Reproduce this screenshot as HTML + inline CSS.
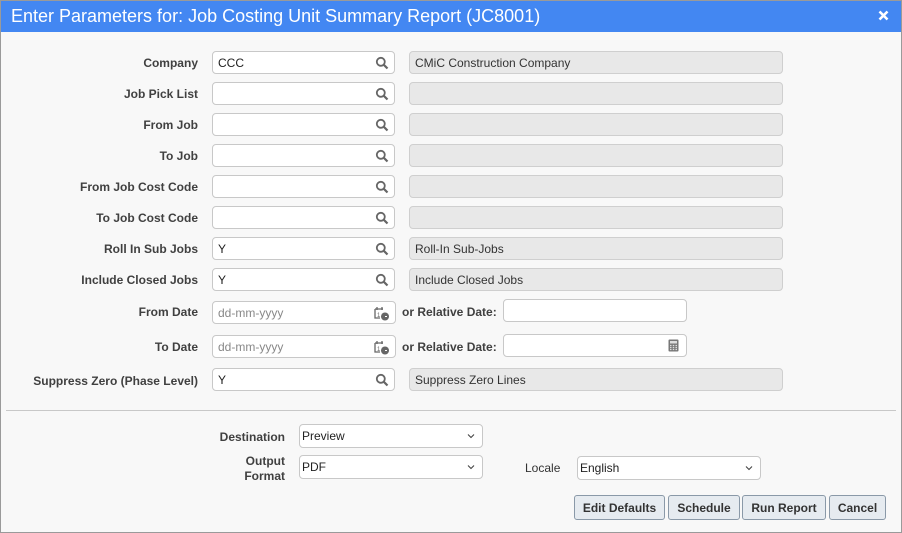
<!DOCTYPE html>
<html><head><meta charset="utf-8"><style>
*{box-sizing:border-box;margin:0;padding:0}
body{width:902px;height:533px;background:#fff;font-family:"Liberation Sans",Arial,sans-serif;overflow:hidden;position:relative}
#win{position:absolute;left:0;top:0;width:902px;height:533px;border:1px solid #9a9a9a;background:#f8f8f8}
#title{position:absolute;left:0;top:0;width:900px;height:31px;background:#4387f2;color:#fff;font-size:18px;line-height:31px;padding-left:10px}
#x{position:absolute;right:12px;top:9px}
.l{position:absolute;font-size:12px;font-weight:bold;color:#404040;text-align:right}
.in{position:absolute;height:23px;background:#fff;border:1px solid #c8c8c8;border-radius:4px;font-size:12px;color:#222;line-height:22px;padding-left:5px}
.ro{position:absolute;height:23px;background:#e8e8e8;border:1px solid #cfcfcf;border-radius:4px;font-size:12px;color:#333;line-height:22px;padding-left:5px}
.ph{color:#888}
.ic{position:absolute;right:5px;top:4px}
.sel{position:absolute;height:24px;background:#fff;border:1px solid #c8c8c8;border-radius:4px;font-size:12px;color:#222;line-height:22px;padding-left:2px}
.sel .ch{position:absolute;right:7px;top:8px}
.btn{position:absolute;top:495px;height:25px;background:#e6ebf0;border:1px solid #8a99a8;border-radius:3px;font-size:12px;font-weight:bold;color:#333;line-height:24px;text-align:center}
.n{font-weight:normal}
</style></head><body>
<div id="win">
<div id="title">Enter Parameters for: Job Costing Unit Summary Report (JC8001)
<svg id="x" width="11" height="11" viewBox="0 0 11 11"><path d="M1.5 1.5L9.5 9.5M9.5 1.5L1.5 9.5" stroke="#fff" stroke-width="2.6"/></svg></div>
</div>

<div class="l" style="left:0;width:198px;top:56px">Company</div>
<div class="in" style="left:212px;top:51px;width:183px">CCC<svg class="ic" width="14" height="14" viewBox="0 0 14 14"><circle cx="5.8" cy="5.8" r="4" fill="none" stroke="#666" stroke-width="1.8"/><path d="M8.8 8.8L12.5 12.5" stroke="#666" stroke-width="2.2"/></svg></div>
<div class="ro" style="left:409px;top:51px;width:374px">CMiC Construction Company</div>

<div class="l" style="left:0;width:198px;top:87px">Job Pick List</div>
<div class="in" style="left:212px;top:82px;width:183px"><svg class="ic" width="14" height="14" viewBox="0 0 14 14"><circle cx="5.8" cy="5.8" r="4" fill="none" stroke="#666" stroke-width="1.8"/><path d="M8.8 8.8L12.5 12.5" stroke="#666" stroke-width="2.2"/></svg></div>
<div class="ro" style="left:409px;top:82px;width:374px"></div>

<div class="l" style="left:0;width:198px;top:118px">From Job</div>
<div class="in" style="left:212px;top:113px;width:183px"><svg class="ic" width="14" height="14" viewBox="0 0 14 14"><circle cx="5.8" cy="5.8" r="4" fill="none" stroke="#666" stroke-width="1.8"/><path d="M8.8 8.8L12.5 12.5" stroke="#666" stroke-width="2.2"/></svg></div>
<div class="ro" style="left:409px;top:113px;width:374px"></div>

<div class="l" style="left:0;width:198px;top:149px">To Job</div>
<div class="in" style="left:212px;top:144px;width:183px"><svg class="ic" width="14" height="14" viewBox="0 0 14 14"><circle cx="5.8" cy="5.8" r="4" fill="none" stroke="#666" stroke-width="1.8"/><path d="M8.8 8.8L12.5 12.5" stroke="#666" stroke-width="2.2"/></svg></div>
<div class="ro" style="left:409px;top:144px;width:374px"></div>

<div class="l" style="left:0;width:198px;top:180px">From Job Cost Code</div>
<div class="in" style="left:212px;top:175px;width:183px"><svg class="ic" width="14" height="14" viewBox="0 0 14 14"><circle cx="5.8" cy="5.8" r="4" fill="none" stroke="#666" stroke-width="1.8"/><path d="M8.8 8.8L12.5 12.5" stroke="#666" stroke-width="2.2"/></svg></div>
<div class="ro" style="left:409px;top:175px;width:374px"></div>

<div class="l" style="left:0;width:198px;top:211px">To Job Cost Code</div>
<div class="in" style="left:212px;top:206px;width:183px"><svg class="ic" width="14" height="14" viewBox="0 0 14 14"><circle cx="5.8" cy="5.8" r="4" fill="none" stroke="#666" stroke-width="1.8"/><path d="M8.8 8.8L12.5 12.5" stroke="#666" stroke-width="2.2"/></svg></div>
<div class="ro" style="left:409px;top:206px;width:374px"></div>

<div class="l" style="left:0;width:198px;top:242px">Roll In Sub Jobs</div>
<div class="in" style="left:212px;top:237px;width:183px">Y<svg class="ic" width="14" height="14" viewBox="0 0 14 14"><circle cx="5.8" cy="5.8" r="4" fill="none" stroke="#666" stroke-width="1.8"/><path d="M8.8 8.8L12.5 12.5" stroke="#666" stroke-width="2.2"/></svg></div>
<div class="ro" style="left:409px;top:237px;width:374px">Roll-In Sub-Jobs</div>

<div class="l" style="left:0;width:198px;top:273px">Include Closed Jobs</div>
<div class="in" style="left:212px;top:268px;width:183px">Y<svg class="ic" width="14" height="14" viewBox="0 0 14 14"><circle cx="5.8" cy="5.8" r="4" fill="none" stroke="#666" stroke-width="1.8"/><path d="M8.8 8.8L12.5 12.5" stroke="#666" stroke-width="2.2"/></svg></div>
<div class="ro" style="left:409px;top:268px;width:374px">Include Closed Jobs</div>

<div class="l" style="left:0;width:198px;top:305px">From Date</div>
<div class="in ph" style="left:212px;top:301px;width:184px">dd-mm-yyyy<svg class="ic" style="top:4px" width="16" height="15" viewBox="0 0 16 15"><path d="M1 3H9M1 3V12H6M3 1V4M8 1V4" stroke="#666" stroke-width="1.3" fill="none"/><text x="3" y="11" font-size="6" fill="#666" font-family="Liberation Sans">1</text><circle cx="11" cy="10.5" r="4" fill="#666"/><path d="M11 10.5H13" stroke="#fff"/></svg></div>
<div class="l" style="left:402px;top:305px">or Relative Date:</div>
<div class="in" style="left:503px;top:299px;width:184px"></div>

<div class="l" style="left:0;width:198px;top:340px">To Date</div>
<div class="in ph" style="left:212px;top:335px;width:184px">dd-mm-yyyy<svg class="ic" style="top:4px" width="16" height="15" viewBox="0 0 16 15"><path d="M1 3H9M1 3V12H6M3 1V4M8 1V4" stroke="#666" stroke-width="1.3" fill="none"/><text x="3" y="11" font-size="6" fill="#666" font-family="Liberation Sans">1</text><circle cx="11" cy="10.5" r="4" fill="#666"/><path d="M11 10.5H13" stroke="#fff"/></svg></div>
<div class="l" style="left:402px;top:340px">or Relative Date:</div>
<div class="in" style="left:503px;top:334px;width:184px"><svg class="ic" style="top:4px;right:7px" width="11" height="13" viewBox="0 0 11 13"><rect x="0.5" y="0.5" width="10" height="12" rx="1" fill="#777"/><rect x="2" y="2" width="7" height="2.5" fill="#ddd"/><path d="M2 6.5h1.5M4.75 6.5h1.5M7.5 6.5h1.5M2 8.5h1.5M4.75 8.5h1.5M7.5 8.5h1.5M2 10.5h1.5M4.75 10.5h1.5M7.5 10.5h1.5" stroke="#ddd" stroke-width="1.2"/></svg></div>

<div class="l" style="left:0;width:198px;top:374px">Suppress Zero (Phase Level)</div>
<div class="in" style="left:212px;top:368px;width:183px">Y<svg class="ic" width="14" height="14" viewBox="0 0 14 14"><circle cx="5.8" cy="5.8" r="4" fill="none" stroke="#666" stroke-width="1.8"/><path d="M8.8 8.8L12.5 12.5" stroke="#666" stroke-width="2.2"/></svg></div>
<div class="ro" style="left:409px;top:368px;width:374px">Suppress Zero Lines</div>

<div style="position:absolute;left:6px;top:410px;width:890px;height:1px;background:#c8c8c8"></div>

<div class="l" style="left:0;width:285px;top:430px">Destination</div>
<div class="sel" style="left:299px;top:424px;width:184px">Preview<svg class="ch" width="8" height="6" viewBox="0 0 8 6"><path d="M1 1.5L4 4.5L7 1.5" stroke="#444" stroke-width="1.1" fill="none"/></svg></div>
<div class="l" style="left:0;width:285px;top:454px;line-height:15px">Output<br>Format</div>
<div class="sel" style="left:299px;top:455px;width:184px">PDF<svg class="ch" width="8" height="6" viewBox="0 0 8 6"><path d="M1 1.5L4 4.5L7 1.5" stroke="#444" stroke-width="1.1" fill="none"/></svg></div>
<div class="l n" style="left:525px;top:461px;color:#333">Locale</div>
<div class="sel" style="left:577px;top:456px;width:184px">English<svg class="ch" width="8" height="6" viewBox="0 0 8 6"><path d="M1 1.5L4 4.5L7 1.5" stroke="#444" stroke-width="1.1" fill="none"/></svg></div>

<div class="btn" style="left:574px;width:91px">Edit Defaults</div>
<div class="btn" style="left:668px;width:72px">Schedule</div>
<div class="btn" style="left:742px;width:84px">Run Report</div>
<div class="btn" style="left:829px;width:57px">Cancel</div>
</body></html>
